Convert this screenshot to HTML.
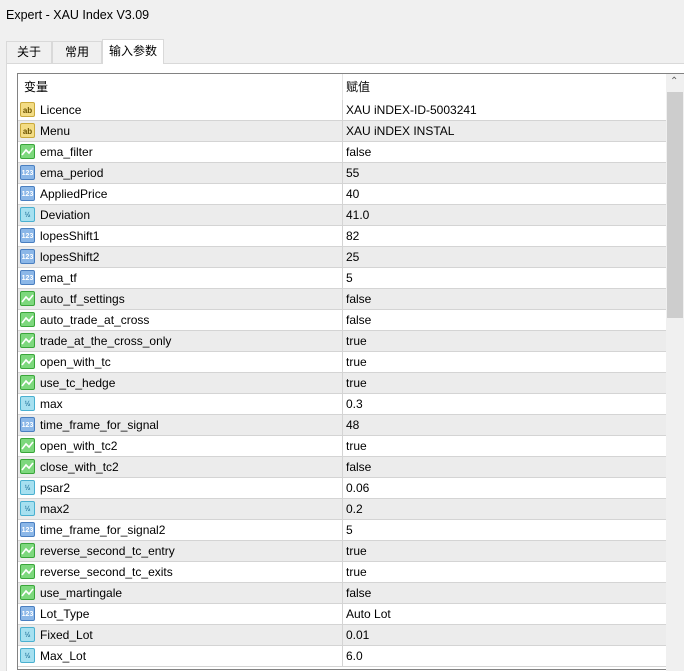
<!DOCTYPE html>
<html><head><meta charset="utf-8"><style>
body{margin:0;width:684px;height:670px;background:#f0f0f0;font-family:"Liberation Sans","Noto Sans CJK SC",sans-serif;font-size:12px;color:#000;position:relative;overflow:hidden}
.t{position:absolute;left:6px;top:8px;font-size:12.5px}
.tab{position:absolute;top:41px;height:22px;border:1px solid #d9d9d9;border-bottom:none;background:#f0f0f0;line-height:20px;text-align:center;box-sizing:border-box}
.panel{position:absolute;left:6px;top:63px;width:678px;height:607px;background:#fff;border-left:1px solid #d9d9d9;border-top:1px solid #d9d9d9}
.lb{position:absolute;left:17px;top:73px;width:667px;height:597px;border:1px solid #828282;border-right:none;box-sizing:border-box;background:#fff}
.row{position:absolute;left:0;width:648px;height:21px;border-bottom:1px solid #d4d4d4;box-sizing:border-box;line-height:21px}
.g{background:#ececec}
.n{position:absolute;left:22px}
.v{position:absolute;left:324px;border-left:1px solid #d4d4d4;padding-left:3px;height:20px}
.ic{position:absolute;left:2px;top:2px;width:15px;height:15px;border-radius:2px;font-size:7px;line-height:15px;text-align:center;font-weight:bold;box-sizing:border-box}
.ab{background:#f3dc84;border:1px solid #c9a93c;color:#6b5300;font-size:8px}
.bo{background:#7dd87d;border:1px solid #3aa53a}
.in{background:#8bb7e8;border:1px solid #4a7fc0;color:#fff}
.fl{background:#a6e0f0;border:1px solid #4ab0d0;color:#2a7aa0}
.sb{position:absolute;left:648px;top:0;width:18px;height:597px;background:#f0f0f0}
</style></head><body>
<div class="t">Expert - XAU Index V3.09</div>
<div class="tab" style="left:6px;width:46px">关于</div>
<div class="tab" style="left:52px;width:50px">常用</div>
<div class="panel"></div>
<div class="tab" style="left:102px;width:62px;top:39px;height:25px;background:#fff;line-height:22px">输入参数</div>
<div class="lb">
<div class="row" style="top:0;height:26px;border-bottom:none;line-height:26px"><span class="n" style="left:6px">变量</span><span class="v" style="height:26px;border-left-color:#e5e5e5">赋值</span></div>
<div id="rows"></div>
<div class="sb"><div style="position:absolute;top:2px;left:4px;font-size:10px;color:#606060">&#8963;</div><div style="position:absolute;top:18px;left:1px;width:16px;height:226px;background:#cdcdcd"></div></div>
</div>
<script>
var d=[["ab","Licence","XAU iNDEX-ID-5003241"],["ab","Menu","XAU iNDEX INSTAL"],["bo","ema_filter","false"],["in","ema_period","55"],["in","AppliedPrice","40"],["fl","Deviation","41.0"],["in","lopesShift1","82"],["in","lopesShift2","25"],["in","ema_tf","5"],["bo","auto_tf_settings","false"],["bo","auto_trade_at_cross","false"],["bo","trade_at_the_cross_only","true"],["bo","open_with_tc","true"],["bo","use_tc_hedge","true"],["fl","max","0.3"],["in","time_frame_for_signal","48"],["bo","open_with_tc2","true"],["bo","close_with_tc2","false"],["fl","psar2","0.06"],["fl","max2","0.2"],["in","time_frame_for_signal2","5"],["bo","reverse_second_tc_entry","true"],["bo","reverse_second_tc_exits","true"],["bo","use_martingale","false"],["in","Lot_Type","Auto Lot"],["fl","Fixed_Lot","0.01"],["fl","Max_Lot","6.0"]];
var lab={ab:"ab",bo:"<svg width='13' height='13' viewBox='0 0 13 13'><path d='M1 10 L5 5 L8 8 L12 3' stroke='#fff' stroke-width='1.6' fill='none'/></svg>",in:"123",fl:"½"};
var h="";d.forEach(function(r,i){h+='<div class="row'+(i%2?' g':'')+'" style="top:'+(26+21*i)+'px"><span class="ic '+r[0]+'">'+lab[r[0]]+'</span><span class="n">'+r[1]+'</span><span class="v">'+r[2]+'</span></div>';});
document.getElementById("rows").innerHTML=h;
</script>
</body></html>
